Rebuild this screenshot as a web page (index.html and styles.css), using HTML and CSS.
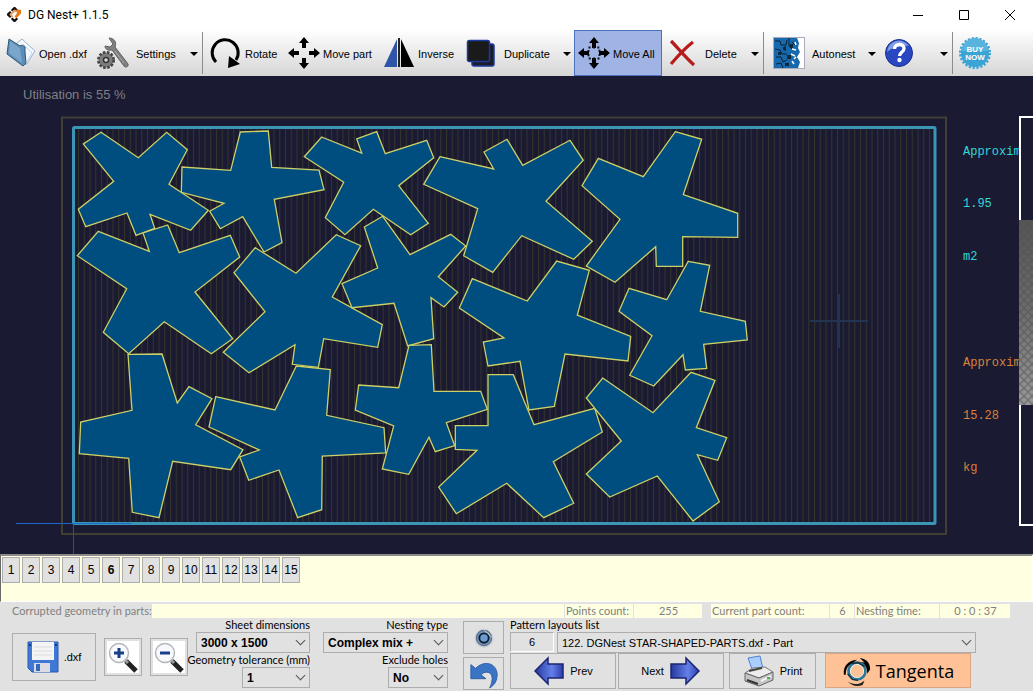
FILE: index.html
```html
<!DOCTYPE html>
<html lang="en">
<head>
    <meta charset="UTF-8">
    <meta name="viewport" content="width=device-width, initial-scale=1.0">
    <title>DG Nest+ 1.1.5</title>
    <link rel="stylesheet" href="styles.css">
</head>
<body>
    <!-- Title bar -->
    <header class="titlebar">
        <svg class="app-icon" viewBox="0 0 16 16">
            <path d="M5 4l3-3 3 3M4 5L1 8l3 3M5 12l3 3 3-3" fill="none" stroke="#111" stroke-width="2.4"/>
            <path d="M6 11L4 8l4-4 3 1" fill="none" stroke="#f0a060" stroke-width="2"/>
            <path d="M9 3h6v4l-5 5-2-2 3-4z" fill="#e07b20"/>
        </svg>
        <span class="title">DG Nest+ 1.1.5</span>
        <div class="window-buttons">
            <button aria-label="Minimize"><svg viewBox="0 0 12 12"><path d="M1 6.5h10"/></svg></button>
            <button aria-label="Maximize"><svg viewBox="0 0 12 12"><path d="M1.500 1.500h9v9h-9z"/></svg></button>
            <button aria-label="Close"><svg viewBox="0 0 12 12"><path d="M1 1l10 10M11 1L1 11"/></svg></button>
        </div>
    </header>

    <!-- Toolbar -->
    <nav class="toolbar">
        <button class="tool">
            <svg viewBox="0 0 32 32">
                <path d="M13 6l5-4 13 12-9 14-8-5z" fill="#f4f8fc" stroke="#9ab4cc"/>
                <path d="M19 7l9 9-5 8" fill="none" stroke="#c4d6e6"/>
                <path d="M5 2l11 7 2-1 3 2v5l1 11-3 3L3 17z" fill="#5b8db8" stroke="#2f5878"/>
                <path d="M6 4l10 7 2 15L5 16z" fill="#86b0d2" opacity=".7"/>
            </svg>
            <span>Open .dxf</span>
        </button>
        <button class="tool split">
            <svg viewBox="0 0 32 32">
                <path d="M12 1c5 0 8 4 6 9l13 17c1 3-3 4-4 2L15 13c-4 1-7-1-7-4l5 1 3-3z" fill="#808080" stroke="#606060"/>
                <path d="M18 14l9 12" stroke="#aaa" fill="none"/>
                <circle cx="9" cy="23" r="7.500" fill="#777" stroke="#444" stroke-width="3" stroke-dasharray="2.500 1.500"/>
                <circle cx="9" cy="23" r="6.500" fill="#7c7c7c"/>
                <circle cx="9" cy="23" r="2.500" fill="#ddd" stroke="#333" stroke-width="1.500"/>
            </svg>
            <span>Settings</span>
        </button>
        <button class="arrow" aria-label="Settings menu"></button>
        <i class="sep"></i>
        <button class="tool">
            <svg viewBox="0 0 32 32">
                <path d="M6 25A13 13 0 1 1 26 23" fill="none" stroke="#000" stroke-width="3"/>
                <path d="M18 31l1-12 11 8z"/>
            </svg>
            <span>Rotate</span>
        </button>
        <button class="tool">
            <svg viewBox="0 0 32 32"><use href="#cross"/></svg>
            <span>Move part</span>
        </button>
        <button class="tool">
            <svg viewBox="0 0 32 32">
                <path d="M14 2v28H1z" fill="#2f55a8"/>
                <path d="M16 1v29" stroke="#222" stroke-width="2"/>
                <path d="M18 2v28h13z"/>
            </svg>
            <span>Inverse</span>
        </button>
        <button class="tool split">
            <svg viewBox="0 0 32 32">
                <rect x="7" y="7" width="22" height="22" rx="2" fill="#1c1c2a" stroke="#1a3a9c" stroke-width="1.500"/>
                <rect x="2.500" y="3.500" width="22" height="21" rx="2" fill="#1a1a1a" stroke="#1a3a9c" stroke-width="1.500"/>
            </svg>
            <span>Duplicate</span>
        </button>
        <button class="arrow" aria-label="Duplicate menu"></button>
        <button class="tool active">
            <svg viewBox="0 0 32 32">
                <use href="#cross"/>
                <rect x="10.500" y="10.500" width="11" height="11" fill="none" stroke="#111" stroke-width="2" stroke-dasharray="2 2.400"/>
            </svg>
            <span>Move All</span>
        </button>
        <button class="tool split">
            <svg viewBox="0 0 32 32"><path d="M5 4c7 7 15 17 23 24M27 5C19 11 11 20 5 27" fill="none" stroke="#b71c1c" stroke-width="3.200"/></svg>
            <span>Delete</span>
        </button>
        <button class="arrow" aria-label="Delete menu"></button>
        <i class="sep"></i>
        <button class="tool split">
            <svg viewBox="0 0 32 32">
                <rect x=".5" y=".5" width="31" height="31" fill="#fff" stroke="#aab"/>
                <path d="M1 1h23l2 5-1 5 2 4-3 5 3 5-2 6H1z" fill="#1769ad"/>
                <path d="M2 4h5l1 4h5l1-5M2 12l5 1 2 4h5M3 20h5l2 5 4-2M16 1v8l3 3M3 27l5-1 2 5M19 5l3 3M12 9v5" fill="none" stroke="#0b2034"/>
                <path d="M10 10h3v3h-3zM5 15h3v3H5zM14 18h4v4h-4zM12 26h4v3h-4zM17 7h3v4h-3z" fill="#12283b"/>
                <path d="M19 12l4 1M18 17l4 2M19 24l2 3M22 5l1 3M23 20l-2 2" stroke="#fff" stroke-width="1.500"/>
            </svg>
            <span>Autonest</span>
        </button>
        <button class="arrow" aria-label="Autonest menu"></button>
        <button class="tool" aria-label="Help">
            <svg viewBox="0 0 32 32">
                <circle cx="15" cy="16" r="13.500" fill="#2947c0" stroke="#1b2f92"/>
                <path d="M3 15a12 12 0 0 1 22-6C18 8 9 10 3 15z" fill="#7f9ae6"/>
                <path d="M10.500 12c0-6 9.500-6 9.500-.5 0 4-4.500 3.500-4.500 7.500" fill="none" stroke="#fff" stroke-width="3.400"/>
                <circle cx="15.500" cy="23" r="2.200" fill="#fff"/>
            </svg>
        </button>
        <button class="arrow" aria-label="Help menu"></button>
        <i class="sep"></i>
        <button class="tool" aria-label="Buy now">
            <svg viewBox="0 0 32 32">
                <circle cx="16" cy="16" r="14" fill="#3ba4d4"/>
                <circle cx="16" cy="16" r="14.500" fill="none" stroke="#3ba4d4" stroke-width="3" stroke-dasharray="2.200 1.600"/>
                <path d="M3 14a13 13 0 0 1 26 0z" fill="#58b4de"/>
                <text x="16" y="14.500" class="buy">BUY</text>
                <text x="16" y="23" class="buy">NOW</text>
            </svg>
        </button>
    </nav>

    <!-- Drawing area -->
    <main class="canvas">
        <svg viewBox="0 76 1033 478" preserveAspectRatio="xMinYMin meet">
            <defs>
                <pattern id="hatch" x="78" y="0" width="5.750" height="10" patternUnits="userSpaceOnUse">
                    <path d="M.5 0v10" stroke="#35342b"/>
                </pattern>
                <pattern id="plate" x="1020" y="220" width="8" height="8" patternUnits="userSpaceOnUse">
                    <path d="M0 4l4-4M4 8l4-4M4 0l4 4M0 4l4 4" stroke="#505050" stroke-width="1.500" stroke-opacity=".5"/>
                </pattern>
                <linearGradient id="steel" x2="0" y2="1">
                    <stop offset="0" stop-color="#555"/>
                    <stop offset=".5" stop-color="#6c6c6c"/>
                    <stop offset="1" stop-color="#999"/>
                </linearGradient>
                <g id="cross">
                    <path d="M16 0l5 6h-3v5h-4V6h-3zM16 32l5-6h-3v-5h-4v5h-3zM0 16l6-5v3h5v4H6v3zM32 16l-6-5v3h-5v4h5v3z"/>
                </g>
            </defs>

            <text x="23" y="99" class="utilisation">Utilisation is 55 %</text>

            <rect x="62" y="117.500" width="884" height="416.500" class="margin-line"/>
            <rect x="75" y="129" width="859" height="393" fill="url(#hatch)"/>
            <path d="M810 321h58M839 294v54" class="pointer"/>

            <!-- nested parts -->
            <g class="parts">
                <polygon points="101,132.300 138.300,157.700 166.700,132.300 187.300,149.700 169,184.300 208.300,210.300 190.700,230.300 150,214.300 154.700,228.300 136,235.300 127,213 85.700,226.700 78.300,209.300 113.700,181.300 83.300,144"/>
                <polygon points="240.300,132 268.300,131 271.700,167.300 319,170 324,189.700 274.300,199.300 282,242.700 264,252 242.700,216.700 220.300,228.700 209.700,211.300 224,203.300 181.300,192.300 182,167 230.700,170.300"/>
                <polygon points="321.700,137 361.700,153 356.700,139 376.700,131.700 385.300,153.700 426.700,140.300 433.700,157.700 398.700,185.700 428.300,223.300 410.700,234.700 373.300,209.300 345,234.700 325.300,217.700 343.700,182.300 304.300,156.700"/>
                <polygon points="440,156.700 493.700,169 484,152 507,139.300 522.700,165.300 570,140.300 583.300,160.300 546,201.300 592.300,241.300 573.700,259.300 521.700,235.700 492.700,272.300 463.700,255.700 477.700,208.700 423.700,184.300"/>
                <polygon points="675.300,131.700 701.700,139.300 683.300,194.700 737.700,213.300 737.700,237.300 682.700,236.700 682.700,266.300 656.300,266.300 655.700,246.700 615,282.300 586.300,266 620,219.300 582,185.700 598.300,158.300 643.300,176.700"/>
                <polygon points="98.300,231.300 149.300,251.300 143,233 167.700,225 179.300,252.700 230.300,235.300 239.700,257 195,292 232.700,338.700 211.300,353.700 164.300,321.700 128.700,353.700 103.300,332.300 126.700,288.700 77.300,255.700"/>
                <polygon points="255.300,247.700 296,273.300 336.300,234.700 360.700,245.700 332.300,297 382.300,324.700 377.700,347.300 323.700,338.700 318.300,367.300 292.300,364.300 295,344.700 249,372.700 223.300,352.300 265,311.700 234,272.700"/>
                <polygon points="382.700,216.300 410,254.700 450.700,234.300 465.700,246 438.300,276.700 457.700,292.300 444,307 431,297.700 433.700,338.700 407.700,346 394,303.300 352,307.700 342,283.700 377.700,268 364.300,227"/>
                <polygon points="472.300,278.700 527.300,301 556.700,261 589.300,270.300 577.300,315 630.700,336.300 628,361 565,354 554.300,406.300 529,410 520,361.300 488,366 483.300,342 504,338 459.300,308"/>
                <polygon points="688.300,261.300 709.700,265.300 700.300,311.300 745.300,321.300 747.300,340 703.700,344.300 706.700,368.300 685.300,370 683,354.700 653.700,386 629.700,375.300 652,335.700 619,311.300 629,288.300 666.700,299.700"/>
                <polygon points="128,354.300 162,354 177.300,403 189,386.700 212,398.700 195.700,424.700 243,449.700 230.700,469.700 172.700,461.300 159,517.700 132.300,512.300 128.700,458.300 79.300,453.700 80.700,422 132,410.300"/>
                <polygon points="215.700,396.700 275,410 296.300,366 330.300,369.700 326.700,415.300 384,427.700 385.700,453 322.300,456 321.700,509.700 297.700,517.700 279,470 248.700,480.300 239.700,457 259.300,450 209,427"/>
                <polygon points="409,345.300 431.300,344.700 434,391.300 480.700,391.300 487.300,409.300 446.300,422.700 454.700,445.700 435.300,451.700 429,437.300 408.700,474.300 382.300,469 393.700,426 355.300,410 358.700,385 398.700,387.700"/>
                <polygon points="488,374.700 513.300,374.700 534,424.700 594.700,408.300 602.300,432 553.300,461.700 573.700,503.300 543.700,517.700 506.700,483.300 456.300,513.700 438.700,487 477,450.300 455.300,449.300 455.300,425.700 488,425.700"/>
                <polygon points="602.700,378 653,412.700 691,372.300 715,380.300 696.300,427.700 726.700,437.700 717.700,460.300 697.300,454.700 719.300,501.700 693,521 657.300,476 609.700,497 586.300,474 621.300,441 586.300,398"/>
            </g>

            <rect x="73.500" y="127.500" width="861.500" height="396" rx="1" class="sheet"/>
            <!-- origin axes -->
            <rect x="16" y="523" width="115" height="1" fill="#1f66cc"/>
            <rect x="73" y="470" width="1" height="54" fill="#e8405a"/>
            <rect x="73" y="524" width="1" height="30" fill="#e00c1c"/>

            <text x="963" y="155" class="area">Approxim</text>
            <text x="963" y="207" class="area">1.95</text>
            <text x="963" y="260" class="area">m2</text>
            <text x="963" y="366" class="weight">Approxim</text>
            <text x="963" y="419" class="weight">15.28</text>
            <text x="963" y="471" class="weight">kg</text>

            <rect x="1020" y="117" width="40" height="408" fill="#1a1a32" stroke="#fff" stroke-width="2"/>
            <rect x="1019" y="220" width="14" height="185" fill="url(#steel)"/>
            <rect x="1019" y="220" width="14" height="185" fill="url(#plate)"/>
        </svg>
    </main>

    <!-- Part numbers -->
    <section class="part-strip">
        <button>1</button>
        <button>2</button>
        <button>3</button>
        <button>4</button>
        <button>5</button>
        <button class="current">6</button>
        <button>7</button>
        <button>8</button>
        <button>9</button>
        <button>10</button>
        <button>11</button>
        <button>12</button>
        <button>13</button>
        <button>14</button>
        <button>15</button>
    </section>

    <section class="status">
        <span class="status-label">Corrupted geometry in parts:</span>
        <span class="cell"></span>
        <span class="cell">Points count:</span>
        <span class="cell value">255</span>
        <span></span>
        <span class="cell">Current part count:</span>
        <span class="cell value">6</span>
        <span class="cell">Nesting time:</span>
        <span class="cell value">0 : 0 : 37</span>
    </section>

    <!-- Bottom controls -->
    <footer class="controls">
        <div class="file-buttons">
            <button class="btn save">
                <svg viewBox="0 0 32 32">
                    <path d="M1 1h30v30H5l-4-4z" fill="#3f78d6" stroke="#2858ae"/>
                    <path d="M5 1h22v18H5z" fill="#f4f4f4"/>
                    <path d="M7 6h18M7 10h18M7 14h18" stroke="#dcdce0"/>
                    <path d="M7 22h16v9H7z" fill="#dcdde2"/>
                    <path d="M9 23h4v7H9z" fill="#3467be"/>
                    <path d="M2 3h2v2H2zM28 3h2v2h-2z" fill="#163a80"/>
                </svg>
                <span>.dxf</span>
            </button>
            <button class="btn zoom" aria-label="Zoom in">
                <svg viewBox="0 0 32 32">
                    <path d="M0 0h32v32H0z" fill="#fff"/>
                    <path d="M19 20l10 10" stroke="#222" stroke-width="5"/>
                    <path d="M17 18l4 4" stroke="#999" stroke-width="3"/>
                    <circle cx="12" cy="12" r="9.500" fill="#f7f9fc" stroke="#b4b8bd" stroke-width="1.500"/>
                    <path d="M12 7v10M7 12h10" stroke="#173f8a" stroke-width="3"/>
                </svg>
            </button>
            <button class="btn zoom" aria-label="Zoom out">
                <svg viewBox="0 0 32 32">
                    <path d="M0 0h32v32H0z" fill="#fff"/>
                    <path d="M19 20l10 10" stroke="#222" stroke-width="5"/>
                    <path d="M17 18l4 4" stroke="#999" stroke-width="3"/>
                    <circle cx="12" cy="12" r="9.500" fill="#f7f9fc" stroke="#b4b8bd" stroke-width="1.500"/>
                    <path d="M7 12h10" stroke="#173f8a" stroke-width="3"/>
                </svg>
            </button>
        </div>

        <div class="fields dims">
            <label for="sheet">Sheet dimensions</label>
            <div class="select wide"><select id="sheet"><option>3000 x 1500</option></select></div>
            <label for="tolerance">Geometry tolerance (mm)</label>
            <div class="select short"><select id="tolerance"><option>1</option></select></div>
        </div>

        <div class="fields nesting">
            <label for="type">Nesting type</label>
            <div class="select"><select id="type"><option>Complex mix +</option></select></div>
            <label for="holes">Exclude holes</label>
            <div class="select shorter"><select id="holes"><option>No</option></select></div>
        </div>

        <div class="actions">
            <button class="btn" aria-label="Nest">
                <svg viewBox="0 0 32 32">
                    <circle cx="16" cy="16" r="10" fill="#c3cbd6"/>
                    <circle cx="16" cy="16" r="8" fill="#7f9cbc" stroke="#5c7690" stroke-width="1.500"/>
                    <circle cx="16" cy="16" r="5" fill="#6a9cd0" stroke="#0e1c30" stroke-width="2"/>
                    <path d="M16 7l9 9M20 6l6 7M24 5l3 4" stroke="#e1e1e1" stroke-width="1.500" stroke-dasharray="1 1"/>
                </svg>
            </button>
            <button class="btn" aria-label="Undo">
                <svg viewBox="0 0 32 32">
                    <path d="M2 6l5 4c9-9 22-6 23 6 0 7-2 11-8 15 4-8 4-17-3-17-3 0-4 1-6 3l5 4H2z" fill="#3a74c4" stroke="#2b5ca6"/>
                </svg>
            </button>
        </div>

        <div class="layouts">
            <label for="pattern">Pattern layouts list</label>
            <div class="pattern-row">
                <input class="count" type="text" value="6" aria-label="Layout count">
                <div class="select"><select id="pattern" class="plain"><option>122. DGNest STAR-SHAPED-PARTS.dxf - Part</option></select></div>
            </div>
            <div class="button-row">
                <button class="btn">
                    <svg viewBox="0 0 32 32">
                        <defs>
                            <linearGradient id="blue">
                                <stop offset="0" stop-color="#26389c"/>
                                <stop offset=".6" stop-color="#6480e8"/>
                                <stop offset="1" stop-color="#2c3cae"/>
                            </linearGradient>
                        </defs>
                        <path d="M2 16L15 3v6h15v14H15v6z" fill="url(#blue)" stroke="#1c2470" stroke-width="1.500"/>
                    </svg>
                    <span>Prev</span>
                </button>
                <button class="btn">
                    <span>Next</span>
                    <svg viewBox="0 0 32 32">
                        <path d="M30 16L17 3v6H2v14h15v6z" fill="url(#blue)" stroke="#1c2470" stroke-width="1.500"/>
                    </svg>
                </button>
                <button class="btn print">
                    <svg viewBox="0 0 32 32">
                        <path d="M5 3l12-2 3 13-10 3z" fill="#a9ceff" stroke="#4c82d0"/>
                        <path d="M2 18l8-5 12-1 8 5-14 6z" fill="#ececec" stroke="#777"/>
                        <path d="M2 18l14 5 14-6v8l-14 6L2 26z" fill="#c4c4c4" stroke="#666"/>
                        <path d="M6 16l13-3" stroke="#444" stroke-width="2"/>
                        <path d="M4 25l11 4" stroke="#333" stroke-width="2"/>
                        <path d="M18 26l10-5" stroke="#f6f6f6" stroke-width="2"/>
                        <path d="M24 23h3" stroke="#4caf50" stroke-width="2"/>
                    </svg>
                    <span>Print</span>
                </button>
                <button class="tangenta">
                    <svg viewBox="0 0 32 32">
                        <circle cx="16" cy="16" r="9" fill="none" stroke="#2c7a9a" stroke-width="3"/>
                        <circle cx="16" cy="16" r="7" fill="none" stroke="#e6f0f2"/>
                        <path d="M2 20C1 11 6 5 16 4l-4 3C6 10 4 14 4 20z"/>
                        <path d="M19 2c7 1 11 5 11 12l-3 5c0-8-3-12-9-13l6 1z"/>
                        <path d="M6 27c5 4 13 4 18-1l-2 5c-6 2-12 1-16-4z" fill="#222"/>
                        <path d="M6 19l5 6 6 1M10 8l7-1 7 4" fill="none" stroke="#14323e" stroke-width="1.500"/>
                    </svg>
                    <span>Tangenta</span>
                </button>
            </div>
        </div>
    </footer>
</body>
</html>
```
FILE: styles.css
```css
:root {
    --panel: #e1e1e1;
    --line: #adadad;
    --yellow: #ffffe1;
    --navy: #1a1a32;
}

* {
    box-sizing: border-box;
}

body {
    margin: 0;
    height: 100vh;
    display: flex;
    flex-direction: column;
    overflow: hidden;
    background: var(--panel);
    font: 11px/14px "Liberation Sans", Arial, sans-serif;
    color: #000;
}

button, input, select {
    font: inherit;
    color: inherit;
    margin: 0;
    padding: 0;
    border: 0;
    border-radius: 0;
    background: none;
}

/* Title bar */
.titlebar {
    flex: none;
    display: flex;
    align-items: center;
    height: 29px;
    padding-left: 7px;
    background: #fff;
}

.app-icon {
    width: 15px;
    height: 15px;
}

.title {
    margin-left: 6px;
    font: 12px/16px Roboto, sans-serif;
}

.window-buttons {
    display: flex;
    margin-left: auto;
}

.window-buttons button {
    display: flex;
    align-items: center;
    justify-content: center;
    width: 46px;
    height: 29px;
}

.window-buttons svg {
    width: 12px;
    height: 12px;
    fill: none;
    stroke: #000;
}

/* Toolbar */
.toolbar {
    flex: none;
    display: grid;
    grid-template-columns: 93px 93px 16px 4px 78px 95px 82px 99px 14px 88px 84px 17px 6px 95px 16px 56px 16px 3px 40px;
    height: 47px;
    padding-top: 1px;
    background: linear-gradient(#fff, #d6d6d6);
}

.tool {
    display: flex;
    align-items: center;
    gap: 3px;
    padding: 0 4px;
    white-space: nowrap;
}

.tool.split {
    gap: 7px;
}

.tool span {
    padding-top: 2px;
}

.tool svg {
    flex: none;
    width: 32px;
    height: 32px;
}

.tool.active {
    padding: 0 3px;
    background: #9fb4e4;
    border: 1px solid #4a72c0;
}

.arrow {
    display: flex;
    align-items: center;
    justify-content: center;
    padding-top: 2px;
}

.arrow::after {
    content: "";
    border: 4px solid transparent;
    border-top-color: #000;
    border-bottom: 0;
}

.sep {
    margin: 2px 0;
    border-left: 1px solid #8c8c8c;
}

.buy {
    font: bold 8px "Liberation Sans", Arial, sans-serif;
    fill: #fff;
    text-anchor: middle;
}

/* Drawing area */
.canvas {
    flex: 1;
    min-height: 0;
    background: var(--navy);
}

.canvas svg {
    display: block;
    width: 100%;
    height: 100%;
}

.utilisation {
    font: 13px "Liberation Sans", Arial, sans-serif;
    fill: #808086;
}

.margin-line {
    fill: none;
    stroke: #403f32;
    stroke-width: 2;
}

.sheet {
    fill: none;
    stroke: #3b95b4;
    stroke-width: 3;
}

.pointer {
    stroke: #22344f;
    stroke-width: 2;
}

.parts polygon {
    fill: #004d7f;
    stroke: #cdd067;
    stroke-width: 1.3;
}

.area, .weight {
    font: 12px "Liberation Mono", "Courier New", monospace;
    fill: #30d8d8;
}

.weight {
    fill: #d9823b;
}

/* Part numbers */
.part-strip {
    flex: none;
    display: flex;
    align-items: flex-start;
    gap: 2px;
    height: 48px;
    padding: 1px 0 0 1px;
    background: var(--yellow);
    border: 1px solid #fff;
    border-top: 2px solid #8a8a8a;
    border-left-color: #696969;
}

.part-strip button {
    width: 18px;
    height: 26px;
    font-size: 12px;
    background: var(--panel);
    border: 1px solid var(--line);
}

.part-strip .current {
    font-weight: bold;
}

/* Status line */
.status {
    flex: none;
    display: grid;
    grid-template-columns: 151px 1fr 68px 68px 7px 118px 24px 84px 70px;
    column-gap: 1px;
    height: 16px;
    padding: 2px 23px 0 0;
    font-family: Lato, "Liberation Sans", sans-serif;
    color: #808080;
    white-space: nowrap;
}

.status-label {
    padding-left: 12px;
}

.cell {
    padding-left: 1px;
    background: var(--yellow);
}

.cell.value {
    text-align: center;
}

/* Bottom controls */
.controls {
    flex: none;
    display: flex;
    height: 73px;
    padding-left: 12px;
}

.btn {
    display: flex;
    align-items: center;
    justify-content: center;
    gap: 5px;
    background: var(--panel);
    border: 1px solid var(--line);
}

.btn svg {
    width: 32px;
    height: 32px;
}

.file-buttons {
    display: flex;
    align-items: center;
    gap: 8px;
    padding-top: 4px;
}

.btn.save {
    width: 84px;
    height: 48px;
}

.btn.zoom {
    width: 38px;
    height: 38px;
}

.fields {
    display: flex;
    flex-direction: column;
    align-items: flex-end;
    white-space: nowrap;
}

.fields label, .layouts label {
    height: 14px;
    font-family: Lato, "Liberation Sans", sans-serif;
}

.dims {
    width: 122px;
}

.nesting {
    width: 125px;
    margin-left: 13px;
}

.select {
    position: relative;
    width: 100%;
    height: 21px;
}

.select.wide {
    width: 114px;
}

.select.short {
    width: 68px;
}

.select.shorter {
    width: 60px;
}

.select select {
    appearance: none;
    width: 100%;
    height: 100%;
    padding: 0 18px 0 4px;
    font-size: 12px;
    font-weight: bold;
    background: var(--panel);
    border: 1px solid var(--line);
}

.select select.plain {
    font-size: 11px;
    font-weight: normal;
}

.select::after {
    content: "";
    position: absolute;
    top: 5px;
    right: 6px;
    width: 6px;
    height: 6px;
    border: solid #555;
    border-width: 0 1px 1px 0;
    transform: rotate(45deg);
    pointer-events: none;
}

.actions {
    display: flex;
    flex-direction: column;
    gap: 3px;
    padding-top: 3px;
    margin-left: 15px;
}

.actions .btn {
    width: 41px;
    height: 33px;
}

.actions svg {
    width: 30px;
    height: 30px;
}

.layouts {
    display: flex;
    flex-direction: column;
    flex: 1;
    max-width: 472px;
    padding-left: 6px;
}

.pattern-row {
    display: flex;
    gap: 3px;
}

.count {
    width: 44px;
    height: 20px;
    text-align: center;
    background: var(--panel);
    border: 1px solid #fff;
    border-top-color: var(--line);
    border-left-color: var(--line);
}

.pattern-row .select {
    flex: 1;
}

.button-row {
    display: flex;
    gap: 2px;
}

.button-row .btn {
    width: 106px;
    height: 36px;
}

.button-row .print {
    width: 87px;
    margin-left: 3px;
}

.tangenta {
    display: flex;
    align-items: center;
    justify-content: center;
    gap: 4px;
    width: 146px;
    height: 35px;
    margin-left: 7px;
    background: #ffc196;
    border: 1px solid #d8a684;
    font: 18px/24px "Open Sans", sans-serif;
}

.tangenta svg {
    width: 30px;
    height: 30px;
}
```
